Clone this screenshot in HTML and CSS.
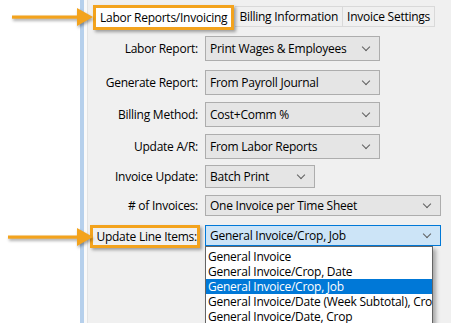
FILE: index.html
```html
<!DOCTYPE html>
<html>
<head>
<meta charset="utf-8">
<link rel="stylesheet" href="styles.css">
</head>
<body>
<div class="screen">
  <div class="gutter"></div>
  <div class="rail"></div>
  <div class="strip"></div>
  <div class="panel">
    <div class="tabs">
      <div class="tab active">Labor Reports/Invoicing</div>
      <div class="tab">Billing Information</div>
      <div class="tab last">Invoice Settings</div>
    </div>
    <div class="form">
      <div class="row r1">
        <div class="lbl">Labor Report:</div>
        <div class="sel h25 w175"><span>Print Wages &amp; Employees</span><i class="chev"></i></div>
      </div>
      <div class="row r2">
        <div class="lbl">Generate Report:</div>
        <div class="sel h25 w175"><span>From Payroll Journal</span><i class="chev"></i></div>
      </div>
      <div class="row r3">
        <div class="lbl">Billing Method:</div>
        <div class="sel h25 w175"><span>Cost+Comm %</span><i class="chev"></i></div>
      </div>
      <div class="row r4">
        <div class="lbl">Update A/R:</div>
        <div class="sel h25 w175"><span>From Labor Reports</span><i class="chev"></i></div>
      </div>
      <div class="row r5">
        <div class="lbl">Invoice Update:</div>
        <div class="sel h23 w110"><span>Batch Print</span><i class="chev"></i></div>
      </div>
      <div class="row r6">
        <div class="lbl"># of Invoices:</div>
        <div class="sel h21 w236"><span>One Invoice per Time Sheet</span><i class="chev"></i></div>
      </div>
      <div class="row r7">
        <div class="lbl"><span class="hl">Update Line Items:</span></div>
        <div class="sel h21 w236 focus"><span>General Invoice/Crop, Job</span><i class="chev"></i>
          <ul class="list">
            <li>General Invoice</li>
            <li>General Invoice/Crop, Date</li>
            <li class="on">General Invoice/Crop, Job</li>
            <li>General Invoice/Date (Week Subtotal), Crop</li>
            <li>General Invoice/Date, Crop</li>
          </ul>
        </div>
      </div>
    </div>
  </div>
  <svg class="arrow a1" width="100" height="30" viewBox="0 0 100 30">
    <rect x="12" y="15.5" width="68" height="3.2" fill="#f3a31d"/>
    <polygon points="77,8 93,17 77,26" fill="#f3a31d"/>
  </svg>
  <svg class="arrow a2" width="100" height="30" viewBox="0 0 100 30">
    <rect x="8" y="15.5" width="72" height="3.2" fill="#f3a31d"/>
    <polygon points="77,8 93,17 77,26" fill="#f3a31d"/>
  </svg>
</div>
</body>
</html>
```

FILE: styles.css
```css
* { box-sizing: border-box; }
html, body { margin: 0; padding: 0; }
body {
  width: 451px;
  height: 323px;
  overflow: hidden;
  background: #ffffff;
  font-family: "Open Sans", "Noto Sans", sans-serif;
  font-size: 12px;
  color: #000;
}
.screen {
  position: relative;
  display: flex;
  width: 451px;
  height: 323px;
}
.gutter { width: 80px; background: #ffffff; }
.rail { width: 4px; background: #b6d0ec; }
.strip { width: 4px; background: #f9f9f9; border-right: 1px solid #e3e3e3; }
.panel {
  flex: 1;
  background: #f0f0f0;
  padding-top: 5px;
}
.tabs {
  display: flex;
  align-items: flex-start;
  padding-left: 5px;
  height: 25px;
}
.tab {
  height: 21px;
  margin-top: 1px;
  padding: 0 4px;
  line-height: 19px;
  border: 1px solid #d9d9d9;
  border-left: none;
  background: #f0f0f0;
  white-space: nowrap;
  letter-spacing: -0.25px;
}
.tab.active {
  height: 25px;
  margin-top: 0;
  background: #ffffff;
  border: 3px solid #f3a31d;
  padding: 0 4px 0 4px;
  line-height: 19px;
  box-shadow: 2px 2px 3px rgba(0,0,0,0.35);
  margin-right: 1px;
  position: relative;
  z-index: 1;
}
.form {
  display: flex;
  flex-direction: column;
}
.row {
  display: flex;
  align-items: flex-start;
}
.r1 { margin-top: 6px; }
.r2 { margin-top: 9px; }
.r3 { margin-top: 7px; }
.r4 { margin-top: 7px; }
.r5 { margin-top: 6px; }
.r6 { margin-top: 7px; }
.r7 { margin-top: 9px; }
.lbl {
  width: 110px;
  margin-right: 7px;
  text-align: right;
  white-space: nowrap;
  letter-spacing: -0.25px;
  align-self: center;
}
.r7 .lbl { align-self: flex-start; }
.hl {
  display: inline-block;
  height: 23px;
  line-height: 17px;
  border: 3px solid #f3a31d;
  padding: 0 0 0 3px;
  margin-right: -2px;
  box-shadow: 2px 2px 3px rgba(0,0,0,0.35);
  background: #f0f0f0;
}
.sel {
  position: relative;
  display: flex;
  align-items: center;
  background: #e5e5e5;
  border: 1px solid #adadad;
  padding-left: 4px;
  white-space: nowrap;
  letter-spacing: -0.25px;
}
.sel.focus {
  background: #cce4f7;
  border-color: #0078d7;
}
.h25 { height: 25px; }
.h23 { height: 23px; }
.h21 { height: 21px; }
.w175 { width: 175px; }
.w110 { width: 110px; }
.w236 { width: 236px; }
.chev {
  position: absolute;
  right: 10px;
  top: 50%;
  width: 6px;
  height: 6px;
  margin-top: -5px;
  border-right: 1px solid #5f5f5f;
  border-bottom: 1px solid #5f5f5f;
  transform: rotate(45deg);
}
.list {
  position: absolute;
  left: -1px;
  top: 20px;
  width: 228px;
  height: 90px;
  margin: 0;
  padding: 2px 0 0 0;
  list-style: none;
  background: #ffffff;
  border: 1px solid #646464;
  box-shadow: 3px 3px 4px rgba(0,0,0,0.3);
  overflow: hidden;
  z-index: 2;
}
.list li {
  height: 15px;
  line-height: 15px;
  padding-left: 2px;
  white-space: nowrap;
  letter-spacing: -0.25px;
}
.list li.on {
  background: #0078d7;
  color: #ffffff;
}
.arrow {
  position: absolute;
  left: 0;
  filter: drop-shadow(1px 2px 1.5px rgba(0,0,0,0.35));
  z-index: 3;
}
.a1 { top: 0px; }
.a2 { top: 220px; }
```
